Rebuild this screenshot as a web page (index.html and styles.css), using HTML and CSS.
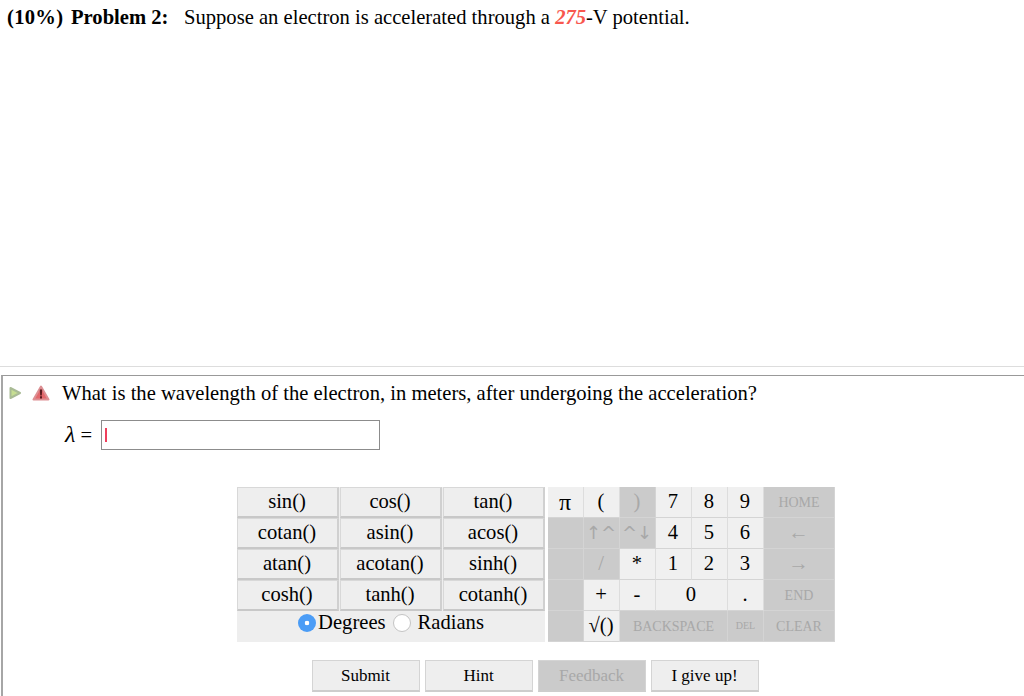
FILE: index.html
```html
<!DOCTYPE html>
<html lang="en">
<head>
<meta charset="utf-8">
<title>Problem 2</title>
<link rel="stylesheet" href="styles.css">
</head>
<body>
<header class="problem">
  <b class="grade">(10%)</b>
  <b class="pname">Problem 2:</b>
  <span>Suppose an electron is accelerated through a <b class="var">275</b>-V potential.</span>
</header>
<div class="panel">
  <div class="question">
    <svg class="ic-play" width="14" height="14" viewBox="0 0 14 14"><path d="M2.5 2 L12 7 L2.5 12 Z" fill="#c6de92" stroke="#a9bb95" stroke-width="2" stroke-linejoin="round"/></svg>
    <svg class="ic-warn" width="18" height="17" viewBox="0 0 18 17"><path d="M9 1.5 L16.5 14.5 H1.5 Z" fill="#e2686c" stroke="#dd9094" stroke-width="2" stroke-linejoin="round"/><path d="M7.8 4.5 H10.2 L9.8 10.5 H8.2 Z M8 11.3 H10 V13.4 H8 Z" fill="#5a1c20"/></svg>
    <span class="qtext">What is the wavelength of the electron, in meters, after undergoing the acceleration?</span>
  </div>
  <div class="answer">
    <span class="lambda"><i class="sym">λ</i> =</span>
    <div class="input"><span class="caret"></span></div>
  </div>
  <div class="calc">
    <div class="funcs">
      <div class="fn">sin()</div><div class="fn">cos()</div><div class="fn">tan()</div>
      <div class="fn">cotan()</div><div class="fn">asin()</div><div class="fn">acos()</div>
      <div class="fn">atan()</div><div class="fn">acotan()</div><div class="fn">sinh()</div>
      <div class="fn">cosh()</div><div class="fn">tanh()</div><div class="fn">cotanh()</div>
      <div class="modes">
        <span class="radio on"></span><span class="mlabel">Degrees</span>
        <span class="radio"></span><span class="mlabel rad">Radians</span>
      </div>
    </div>
    <div class="keys">
      <div class="k pi">π</div><div class="k">(</div><div class="k off">)</div><div class="k">7</div><div class="k">8</div><div class="k">9</div><div class="k off sm">HOME</div>
      <div class="k off"></div><div class="k off arrows">↑^</div><div class="k off arrows">^↓</div><div class="k">4</div><div class="k">5</div><div class="k">6</div><div class="k off">←</div>
      <div class="k off"></div><div class="k off">/</div><div class="k">*</div><div class="k">1</div><div class="k">2</div><div class="k">3</div><div class="k off">→</div>
      <div class="k off"></div><div class="k">+</div><div class="k">-</div><div class="k w2">0</div><div class="k">.</div><div class="k off sm">END</div>
      <div class="k off"></div><div class="k">√()</div><div class="k off w3 sm">BACKSPACE</div><div class="k off xs">DEL</div><div class="k off sm">CLEAR</div>
    </div>
  </div>
  <div class="actions">
    <div class="btn">Submit</div>
    <div class="btn">Hint</div>
    <div class="btn off">Feedback</div>
    <div class="btn">I give up!</div>
  </div>
</div>
</body>
</html>
```
FILE: styles.css
```css
html, body { margin: 0; padding: 0; }
body {
  width: 1024px;
  height: 696px;
  overflow: hidden;
  background: #fff;
  color: #000;
  font-family: "Liberation Serif", "Times New Roman", serif;
  font-size: 20.6px;
}
.problem {
  height: 367px;
  box-sizing: border-box;
  border-bottom: 1px solid #ddd;
  padding: 6px 0 0 7px;
  line-height: 22px;
  display: flex;
  white-space: pre;
}
.grade { width: 64px; letter-spacing: 0.3px; }
.pname { width: 113px; }
.var { color: #f8574e; font-style: italic; }
.panel {
  margin: 8px 0 0 1px;
  height: 321px;
  border-top: 1px solid #999;
  border-left: 2px solid #a6a6a6;
}
.question {
  display: flex;
  align-items: center;
  height: 34px;
  padding-left: 5px;
}
.ic-play { margin-right: 10px; }
.ic-warn { margin-right: 12px; }
.answer {
  display: flex;
  align-items: center;
  height: 32px;
  margin-top: 9px;
  padding-left: 59px;
}
.lambda {
  width: 39px;
  box-sizing: border-box;
  padding-left: 3px;
  white-space: nowrap;
}
.sym { font-size: 24px; line-height: 20px; }
.input {
  width: 274px;
  height: 28px;
  border: 1px solid #8c8c8c;
  display: flex;
  align-items: center;
  padding-left: 3px;
}
.caret { width: 2px; height: 14px; background: #ef3f5c; }
.calc {
  display: flex;
  gap: 3px;
  margin: 36px 0 0 234px;
}
.funcs {
  width: 308px;
  display: grid;
  grid-template-columns: 102px 102px 102px;
  grid-auto-rows: 31px;
  column-gap: 1px;
  background: #eee;
}
.fn {
  background: #eee;
  border: 1px solid #d8d8d8;
  border-bottom: 2px solid #c8c8c8;
  border-right: 2px solid #d0d0d0;
  box-sizing: border-box;
  display: flex;
  align-items: center;
  justify-content: center;
  padding: 0 1px 1px 0;
}
.modes {
  grid-column: 1 / 4;
  display: flex;
  align-items: flex-start;
  justify-content: center;
  height: 31px;
  line-height: 22px;
}
.radio {
  width: 18px;
  height: 18px;
  margin-top: 3px;
  border-radius: 50%;
  background: #fff;
  border: 1px solid #c4c4c4;
  box-sizing: border-box;
  flex: none;
}
.radio.on { background: radial-gradient(circle, #fff 0 2px, #4a9cf6 2.6px); border: 0; margin-right: 2px; }
.mlabel { margin-right: 7px; }
.mlabel.rad { margin: 0 0 0 7px; }
.keys {
  display: grid;
  width: 287px;
  grid-template-columns: repeat(6, 36px) 71px;
  grid-auto-rows: 31px;
}
.k {
  background: #f0f0f0;
  border-right: 1px solid #ddd;
  border-bottom: 1px solid #d4d4d4;
  box-sizing: border-box;
  display: flex;
  align-items: center;
  justify-content: center;
  line-height: 1;
  padding: 0 1px 1px 0;
}
.k.off { background: #cbcbcb; color: #a8a8a8; border-color: #d4d4d4; }
.w2 { grid-column: span 2; }
.w3 { grid-column: span 3; }
.k.pi { font-size: 24px; }
.k.sm { font-size: 14px; padding: 2px 0 0; }
.k.xs { font-size: 10px; padding: 0; }
.k.arrows { font-family: "DejaVu Sans", sans-serif; font-size: 18px; }
.actions {
  display: flex;
  gap: 5px;
  margin: 18px 0 0 309px;
}
.btn {
  width: 108px;
  height: 32px;
  background: #eee;
  border: 1px solid #d4d4d4;
  border-bottom: 2px solid #cdcdcd;
  box-sizing: border-box;
  display: flex;
  align-items: center;
  justify-content: center;
  padding-right: 1px;
  font-size: 17px;
}
.btn.off { background: #cbcbcb; color: #a8a8a8; }
```
